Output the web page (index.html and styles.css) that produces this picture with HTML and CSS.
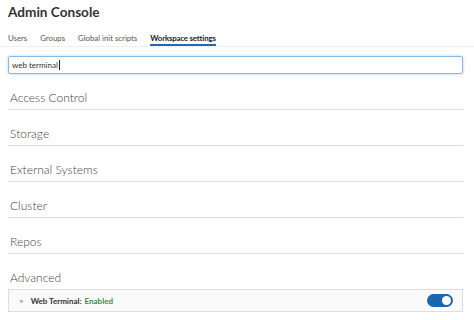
FILE: index.html
```html
<!DOCTYPE html>
<html>
<head>
<meta charset="utf-8">
<link rel="stylesheet" href="styles.css">
</head>
<body>
<div class="page">
  <h1 class="title">Admin Console</h1>
  <nav class="tabs">
    <span class="tab">Users</span>
    <span class="tab">Groups</span>
    <span class="tab">Global init scripts</span>
    <span class="tab active">Workspace settings</span>
  </nav>
  <div class="content">
    <div class="search"><span class="search-text">web terminal</span><span class="caret"></span></div>
    <div class="section">Access Control</div>
    <div class="section">Storage</div>
    <div class="section">External Systems</div>
    <div class="section">Cluster</div>
    <div class="section">Repos</div>
    <div class="section last">Advanced</div>
    <div class="setting">
      <span class="chev">&gt;</span>
      <span class="label">Web Terminal:</span>
      <span class="status">Enabled</span>
      <span class="toggle"><span class="knob"></span></span>
    </div>
  </div>
</div>
</body>
</html>
```
FILE: styles.css
```css
html, body { margin: 0; padding: 0; background: #fff; }
body { font-family: Lato, "Open Sans", sans-serif; color: #333; }
.page { padding-top: 2px; }
.title { margin: 0 0 0 8px; font-size: 13.6px; font-weight: 700; line-height: 20px; color: #333; }
.tabs { display: flex; gap: 13px; padding: 11px 8px 0; border-bottom: 1px solid #eee; font-size: 7.8px; color: #555; }
.tab { padding-bottom: 2px; line-height: 11px; }
.tab.active { color: #222; font-weight: 700; letter-spacing: -0.15px; border-bottom: 2px solid #1e6bb8; padding-bottom: 0; }
.content { padding: 9px 11px 0 8px; }
.search { height: 16px; border: 1px solid #8ab8e6; border-radius: 2px; box-shadow: 0 0 3px rgba(90,150,220,0.45); display: flex; align-items: center; padding-left: 3px; font-size: 8px; color: #333; }
.caret { width: 1px; height: 10px; background: #222; margin-left: 1px; }
.section { font-size: 12px; font-weight: 300; color: #444; line-height: 17px; padding: 15px 0 3px 2px; border-bottom: 1px solid #ddd; }
.section.last { border-bottom: none; padding-bottom: 3px; }
.setting { height: 21px; border: 1px solid #ddd; background: #fafafa; display: flex; align-items: center; padding: 0 9px 0 10px; font-size: 8px; }
.chev { color: #444; margin-right: 7px; }
.label { font-weight: 700; color: #333; margin-right: 3px; }
.status { color: #3c8a4a; font-weight: 700; }
.toggle { margin-left: auto; width: 26px; height: 13px; border-radius: 7px; background: #1b66b0; position: relative; }
.knob { position: absolute; right: 2px; top: 2px; width: 9px; height: 9px; border-radius: 50%; background: #fff; }
```
